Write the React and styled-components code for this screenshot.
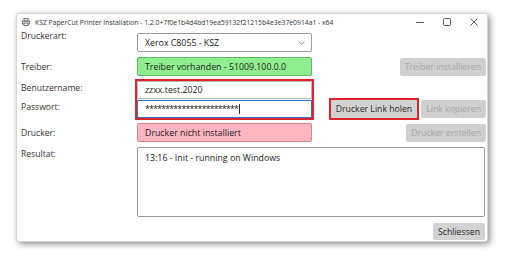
import React from "react";
import styled, { createGlobalStyle } from "styled-components";

const Global = createGlobalStyle`
  html, body { margin: 0; padding: 0; background: #fff; }
  body { font-family: "Open Sans", "Noto Sans", sans-serif; color: #222; }
`;

const Stage = styled.div`
  padding: 13px 0 0 16px;
  width: 505px;
  height: 257px;
  box-sizing: border-box;
`;

const Window = styled.div`
  width: 472px;
  height: 229px;
  box-sizing: border-box;
  background: #fff;
  border: 1px solid #d6d6d6;
  border-radius: 3px;
  box-shadow: 2px 2px 6px rgba(0, 0, 0, 0.45);
  display: flex;
  flex-direction: column;
`;

const TitleBar = styled.div`
  height: 16px;
  display: flex;
  align-items: center;
  padding-left: 5px;
  font-size: 6.8px;
  color: #333;
  white-space: nowrap;
`;

const TitleText = styled.span`
  margin-left: 5px;
  flex: 1;
  overflow: hidden;
`;

const Controls = styled.div`
  display: flex;
  align-items: center;
`;

const Control = styled.div`
  width: 27px;
  height: 16px;
  display: flex;
  align-items: center;
  justify-content: center;
`;

const Body = styled.div`
  flex: 1;
  display: flex;
  flex-direction: column;
  gap: 5px;
  padding: 3px 1px 1px 4px;
`;

const Row = styled.div`
  display: grid;
  grid-template-columns: 116px 175px 1fr;
  align-items: ${(p) => p.$align || "center"};
`;

const WideRow = styled.div`
  display: grid;
  grid-template-columns: 116px 1fr;
  align-items: start;
`;

const Label = styled.div`
  font-size: 8.6px;
  color: #333;
  line-height: 12px;
  margin-top: ${(p) => p.$offset || 0}px;
`;

const Field = styled.div`
  height: 19px;
  box-sizing: border-box;
  border: 1px solid ${(p) => p.$border || "#9a9a9a"};
  background: ${(p) => p.$bg || "#fff"};
  border-radius: 2px;
  display: flex;
  align-items: center;
  padding-left: 7px;
  font-size: 8.8px;
  color: #222;
`;

const Select = styled(Field)`
  justify-content: space-between;
  padding-right: 6px;
`;

const Actions = styled.div`
  display: flex;
  justify-content: flex-end;
  align-items: center;
  gap: 4px;
`;

const Button = styled.div`
  height: ${(p) => p.$h || 18}px;
  box-sizing: border-box;
  padding: 0 5px;
  display: flex;
  align-items: center;
  justify-content: center;
  background: ${(p) => (p.$disabled ? "#cfcfcf" : "#d2d2d2")};
  color: ${(p) => (p.$disabled ? "#a6a6a6" : "#2a2a2a")};
  border-radius: ${(p) => (p.$marked ? 0 : 2)}px;
  font-size: 8.7px;
  white-space: nowrap;
  ${(p) => p.$marked && "outline: 2px solid #e3232c; outline-offset: 0px;"}
`;

const CredRow = styled.div`
  display: grid;
  grid-template-columns: 116px 175px 1fr;
  grid-template-rows: 18px 18px;
  row-gap: 1px;
`;

const CredLabels = styled.div`
  grid-column: 1;
  grid-row: 1 / span 2;
  display: flex;
  flex-direction: column;
  gap: 7px;
  padding-top: 1px;
`;

const CredGroup = styled.div`
  grid-column: 2;
  grid-row: 1 / span 2;
  display: flex;
  flex-direction: column;
  gap: 1px;
  outline: 2px solid #e3232c;
  outline-offset: 0px;
`;

const Input = styled.div`
  height: 18px;
  box-sizing: border-box;
  border: 1px solid ${(p) => (p.$focus ? "#2b78c8" : "#b8b8b8")};
  background: #fff;
  display: flex;
  align-items: center;
  padding-left: 7px;
  font-size: 8.8px;
  color: #222;
  letter-spacing: ${(p) => (p.$pw ? "-0.8px" : "0")};
`;

const Caret = styled.span`
  display: inline-block;
  width: 1px;
  height: 10px;
  background: #222;
  margin-left: 1px;
`;

const CredActions = styled(Actions)`
  grid-column: 3;
  grid-row: 2;
`;

const TextArea = styled.div`
  height: 70px;
  box-sizing: border-box;
  border: 1px solid #9a9a9a;
  border-radius: 2px;
  padding: 4px 7px;
  font-size: 8.8px;
  color: #222;
  margin-right: 1px;
`;

const Footer = styled.div`
  display: flex;
  justify-content: flex-end;
  padding-right: 1px;
  margin-top: 1px;
`;

function AppIcon() {
  return (
    <svg width="8" height="8" viewBox="0 0 8 8">
      <rect x="2" y="0.5" width="4" height="2.5" fill="none" stroke="#555" strokeWidth="0.8" />
      <rect x="0.5" y="3" width="7" height="3" fill="none" stroke="#555" strokeWidth="0.8" />
      <rect x="2" y="5" width="4" height="2.5" fill="#fff" stroke="#555" strokeWidth="0.8" />
    </svg>
  );
}

function Chevron() {
  return (
    <svg width="7" height="4" viewBox="0 0 7 4">
      <path d="M0.5 0.5 L3.5 3.3 L6.5 0.5" fill="none" stroke="#777" strokeWidth="0.8" />
    </svg>
  );
}

export default function App() {
  return (
    <>
      <Global />
      <Stage>
        <Window>
          <TitleBar>
            <AppIcon />
            <TitleText>
              KSZ PaperCut Printer Installation - 1.2.0+7f0e1b4d4bd19ea59132f21215b4e3e37e0914a1 - x64
            </TitleText>
            <Controls>
              <Control>
                <svg width="8" height="8" viewBox="0 0 8 8">
                  <path d="M0 4.5 H8" stroke="#333" strokeWidth="0.8" />
                </svg>
              </Control>
              <Control>
                <svg width="8" height="8" viewBox="0 0 8 8">
                  <rect x="0.5" y="0.5" width="7" height="7" rx="1" fill="none" stroke="#333" strokeWidth="0.8" />
                </svg>
              </Control>
              <Control>
                <svg width="8" height="8" viewBox="0 0 8 8">
                  <path d="M0.5 0.5 L7.5 7.5 M7.5 0.5 L0.5 7.5" stroke="#333" strokeWidth="0.8" />
                </svg>
              </Control>
            </Controls>
          </TitleBar>
          <Body>
            <Row $align="start">
              <Label $offset={-3}>Druckerart:</Label>
              <Select>
                <span>Xerox C8055 - KSZ</span>
                <Chevron />
              </Select>
            </Row>
            <Row>
              <Label>Treiber:</Label>
              <Field $bg="#90ee90" $border="#62b862">Treiber vorhanden - 51009.100.0.0</Field>
              <Actions>
                <Button $disabled>Treiber installieren</Button>
              </Actions>
            </Row>
            <CredRow>
              <CredLabels>
                <Label>Benutzername:</Label>
                <Label>Passwort:</Label>
              </CredLabels>
              <CredGroup>
                <Input>zzxx.test.2020</Input>
                <Input $focus $pw>
                  ***********************
                  <Caret />
                </Input>
              </CredGroup>
              <CredActions>
                <Button $marked>Drucker Link holen</Button>
                <Button $disabled>Link kopieren</Button>
              </CredActions>
            </CredRow>
            <Row>
              <Label>Drucker:</Label>
              <Field $bg="#ffb6c1" $border="#d4868f">Drucker nicht installiert</Field>
              <Actions>
                <Button $disabled>Drucker erstellen</Button>
              </Actions>
            </Row>
            <WideRow>
              <Label $offset={1}>Resultat:</Label>
              <TextArea>13:16 - Init - running on Windows</TextArea>
            </WideRow>
            <Footer>
              <Button $h={17}>Schliessen</Button>
            </Footer>
          </Body>
        </Window>
      </Stage>
    </>
  );
}
